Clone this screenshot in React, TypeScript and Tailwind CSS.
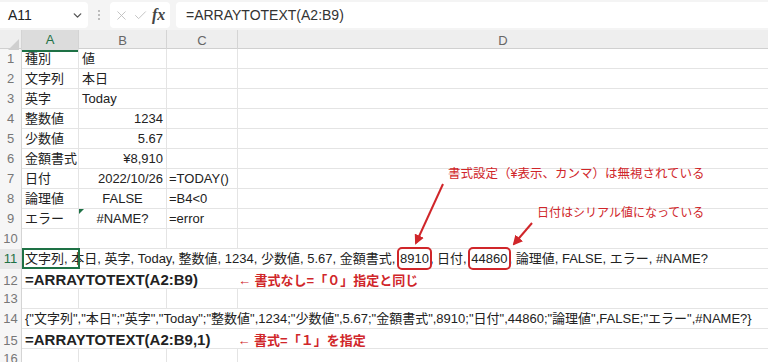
import React from "react";
import { ChevronDown, X, Check } from "lucide-react";

type Row = {
  a: string;
  b?: string;
  bAlign?: "left" | "right" | "center";
  c?: string;
  errorMark?: boolean;
};

const rows: Row[] = [
  { a: "種別", b: "値" },
  { a: "文字列", b: "本日" },
  { a: "英字", b: "Today" },
  { a: "整数値", b: "1234", bAlign: "right" },
  { a: "少数値", b: "5.67", bAlign: "right" },
  { a: "金額書式", b: "¥8,910", bAlign: "right" },
  { a: "日付", b: "2022/10/26", bAlign: "right", c: "=TODAY()" },
  { a: "論理値", b: "FALSE", bAlign: "center", c: "=B4<0" },
  { a: "エラー", b: "#NAME?", bAlign: "center", c: "=error", errorMark: true },
  { a: "" },
];

const gridCols = "grid grid-cols-[22px_57px_88px_71px_1fr]";

const RowNum: React.FC<{ n: number; active?: boolean }> = ({ n, active }) => (
  <div
    className={`flex items-center justify-center border-r border-[#d4d4d4] text-[13px] ${
      active ? "bg-[#e6e6e6] text-[#1e7145]" : "bg-[#f6f6f6] text-[#777]"
    }`}
  >
    {n}
  </div>
);

const Box: React.FC<{ children: React.ReactNode }> = ({ children }) => (
  <span className="rounded-[3px] px-[1px] py-[2px] outline-2 outline-[#d0262a]">
    {children}
  </span>
);

const App: React.FC = () => {
  return (
    <div className="relative h-[362px] w-[768px] overflow-hidden bg-white font-['Liberation_Sans','Noto_Sans_CJK_JP',sans-serif] text-[#222]">
      {/* formula bar */}
      <div className="flex h-[30px] items-center gap-[6px] bg-[#f4f4f4] pb-[2px] pt-[2px]">
        <div className="flex h-[26px] w-[88px] items-center justify-between rounded-r-[4px] bg-white pl-[8px] pr-[4px] text-[14px]">
          <span>A11</span>
          <ChevronDown size={13} strokeWidth={2.5} className="text-[#555]" />
        </div>
        <div className="flex w-[10px] flex-col items-center gap-[2px]">
          <span className="h-[2px] w-[2px] rounded-full bg-[#aaa]" />
          <span className="h-[2px] w-[2px] rounded-full bg-[#aaa]" />
          <span className="h-[2px] w-[2px] rounded-full bg-[#aaa]" />
        </div>
        <div className="flex h-[26px] w-[60px] items-center gap-[4px] rounded-[4px] bg-white px-[4px]">
          <X size={15} strokeWidth={1.4} className="text-[#bbb]" />
          <Check size={15} strokeWidth={1.4} className="text-[#bbb]" />
          <span className="font-['Liberation_Serif',serif] text-[16px] font-bold italic text-[#444]">
            fx
          </span>
        </div>
        <div className="flex h-[26px] flex-1 items-center rounded-l-[4px] bg-white pl-[10px] text-[14px] text-[#333]">
          =ARRAYTOTEXT(A2:B9)
        </div>
      </div>

      {/* column headers */}
      <div className={`${gridCols} h-[19px] border-b border-[#d0d0d0] bg-[#eeeeee] text-[13px] text-[#666]`}>
        <div className="relative border-r border-[#d4d4d4]">
          <svg className="absolute bottom-[2px] right-[2px]" width="11" height="11" viewBox="0 0 11 11">
            <polygon points="11,0 11,11 0,11" fill="#cfcfcf" />
          </svg>
        </div>
        <div className="flex items-center justify-center border-b-2 border-r border-b-[#1e7145] border-r-[#d4d4d4] bg-[#dcdcdc] text-[#1e7145]">
          A
        </div>
        <div className="flex items-center justify-center border-r border-[#d4d4d4]">B</div>
        <div className="flex items-center justify-center border-r border-[#d4d4d4]">C</div>
        <div className="flex items-center justify-center">D</div>
      </div>

      {/* rows 1-10 */}
      {rows.map((r, i) => (
        <div key={i} className={`${gridCols} h-5 border-b border-[#e4e4e4] text-[13px]`}>
          <RowNum n={i + 1} />
          <div className="flex items-center whitespace-nowrap border-r border-[#e4e4e4] pl-[3px]">
            {r.a}
          </div>
          <div
            className={`relative flex items-center whitespace-nowrap border-r border-[#e4e4e4] px-[3px] ${
              r.bAlign === "right"
                ? "justify-end"
                : r.bAlign === "center"
                ? "justify-center"
                : "justify-start"
            }`}
          >
            {r.errorMark && (
              <span className="absolute left-0 top-0 h-0 w-0 border-r-[5px] border-t-[5px] border-r-transparent border-t-[#1e7145]" />
            )}
            {r.b}
          </div>
          <div className="flex items-center whitespace-nowrap border-r border-[#e4e4e4] pl-[2px]">
            {r.c}
          </div>
          <div />
        </div>
      ))}

      {/* row 11 */}
      <div className={`${gridCols} h-5 border-b border-[#e4e4e4] text-[13px]`}>
        <RowNum n={11} active />
        <div className="relative col-span-4 flex items-center whitespace-nowrap pl-[3px]">
          <span className="pointer-events-none absolute left-0 top-[-1px] h-[21px] w-[58px] border-2 border-[#1e7145]" />
          <span>
            文字列, 本日, 英字, Today, 整数値, 1234, 少数値, 5.67, 金額書式, <Box>8910</Box>, 日付,{" "}
            <Box>44860</Box>, 論理値, FALSE, エラー, #NAME?
          </span>
        </div>
      </div>

      {/* row 12 */}
      <div className={`${gridCols} h-5 border-b border-[#e4e4e4]`}>
        <RowNum n={12} />
        <div className="col-span-4 flex items-center gap-[40px] whitespace-nowrap pl-[3px]">
          <span className="text-[15px] font-bold">=ARRAYTOTEXT(A2:B9)</span>
          <span className="text-[13px] font-bold text-[#d0262a]">← 書式なし=「０」指定と同じ</span>
        </div>
      </div>

      {/* row 13 */}
      <div className={`${gridCols} h-5 border-b border-[#e4e4e4] text-[13px]`}>
        <RowNum n={13} />
        <div className="border-r border-[#e4e4e4]" />
        <div className="border-r border-[#e4e4e4]" />
        <div className="border-r border-[#e4e4e4]" />
        <div />
      </div>

      {/* row 14 */}
      <div className={`${gridCols} h-5 border-b border-[#e4e4e4]`}>
        <RowNum n={14} />
        <div className="col-span-4 flex items-center whitespace-nowrap pl-[3px] text-[13px]">
          {'{"文字列","本日";"英字","Today";"整数値",1234;"少数値",5.67;"金額書式",8910;"日付",44860;"論理値",FALSE;"エラー",#NAME?}'}
        </div>
      </div>

      {/* row 15 */}
      <div className={`${gridCols} h-5 border-b border-[#e4e4e4]`}>
        <RowNum n={15} />
        <div className="col-span-4 flex items-center gap-[27px] whitespace-nowrap pl-[3px]">
          <span className="text-[15px] font-bold">=ARRAYTOTEXT(A2:B9,1)</span>
          <span className="text-[13px] font-bold text-[#d0262a]">← 書式=「１」を指定</span>
        </div>
      </div>

      {/* row 16 */}
      <div className={`${gridCols} h-5 border-b border-[#e4e4e4] text-[13px]`}>
        <RowNum n={16} />
        <div className="border-r border-[#e4e4e4]" />
        <div className="border-r border-[#e4e4e4]" />
        <div className="border-r border-[#e4e4e4]" />
        <div />
      </div>

      {/* callouts drawn over the sheet */}
      <span className="absolute left-[448px] top-[165px] whitespace-nowrap text-[12.5px] text-[#d0262a]">
        書式設定（¥表示、カンマ）は無視されている
      </span>
      <span className="absolute left-[537px] top-[204px] whitespace-nowrap text-[12px] text-[#d0262a]">
        日付はシリアル値になっている
      </span>
      <svg className="pointer-events-none absolute left-0 top-0" width="768" height="362">
        <defs>
          <marker id="ah" viewBox="0 0 10 10" refX="8" refY="5" markerWidth="5" markerHeight="5" orient="auto">
            <path d="M0,0 L10,5 L0,10 z" fill="#d0262a" />
          </marker>
        </defs>
        <line x1="443" y1="184" x2="416" y2="243" stroke="#d0262a" strokeWidth="2" markerEnd="url(#ah)" />
        <line x1="532" y1="223" x2="514" y2="244" stroke="#d0262a" strokeWidth="2" markerEnd="url(#ah)" />
      </svg>
    </div>
  );
};

export default App;
